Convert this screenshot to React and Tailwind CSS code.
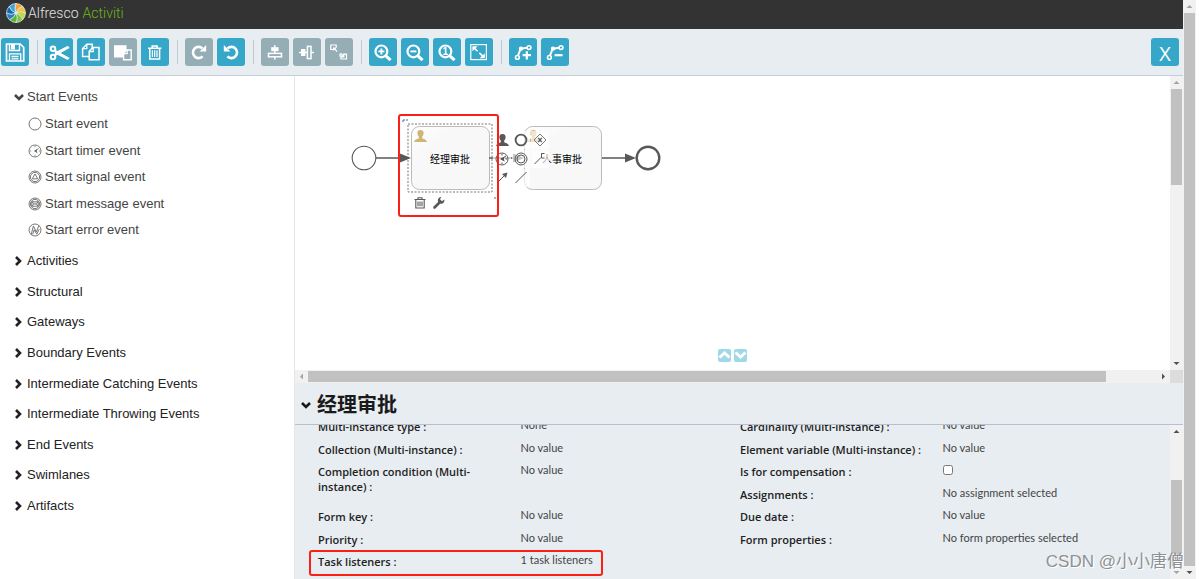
const SANS = "font-['Liberation_Sans','Noto_Sans_CJK_SC',sans-serif]";

/* ---------- toolbar icons, all on a 28x28 grid ---------- */

const Icon = ({ children }) => (
  <svg
    viewBox="0 0 28 28"
    className="size-7"
    fill="none"
    stroke="currentColor"
    strokeWidth="1.7"
    aria-hidden="true"
  >
    {children}
  </svg>
);

const SaveIcon = () => (
  <Icon>
    <path d="M5.5 6h13.7l3.5 3.5V23H5.5z" />
    <path d="M8.5 6v6.5h10V6" strokeWidth="1.4" />
    <path d="M10 6h4v5.5h-4z" fill="currentColor" stroke="none" />
    <path d="M8.5 23v-7.2h11.2V23M10.5 18.5h7M10.5 20.8h7" strokeWidth="1.3" />
  </Icon>
);

const CutIcon = () => (
  <Icon>
    <circle cx="8" cy="10.8" r="2.3" strokeWidth="2" />
    <circle cx="8" cy="19" r="2.3" strokeWidth="2" />
    <path d="M9.8 12.2L12 13.8 22.6 8.4 24.2 9.6 14.8 15 24.2 20.2 22.6 21.4 12 16 9.8 17.6" fill="currentColor" strokeWidth="1" />
    <path d="M9.6 12.2l4.6 3.4M9.6 17.6l4.6-3.4" strokeWidth="2" />
  </Icon>
);

const CopyIcon = () => (
  <Icon>
    <path d="M12 18.5H5.6v-8L9.8 6.2h5.4v5" strokeWidth="1.5" />
    <path d="M5.6 10.6h4.2V6.2" strokeWidth="1.3" />
    <path d="M12.2 13.2l3.8-3.8h6v12.4h-9.8z" strokeWidth="1.5" />
    <path d="M12.2 13.6h4V9.4" strokeWidth="1.3" />
  </Icon>
);

const PasteIcon = () => (
  <Icon>
    <path d="M5 7.2h12.5v12.3H5z" fill="currentColor" stroke="none" />
    <path d="M14.6 15.2l3.2-3.2h4.4v9.8h-7.6z" fill="#95aeb5" strokeWidth="1.4" />
    <path d="M14.6 15.6h3.6V12" strokeWidth="1.2" />
  </Icon>
);

const TrashIcon = () => (
  <Icon>
    <path d="M7 10.2h13.4M11.2 10V7.9h5V10M8.8 10.4V21h9.8V10.4" strokeWidth="1.5" />
    <path d="M11.4 12.3v6.8M13.7 12.3v6.8M16 12.3v6.8" strokeWidth="1.2" />
  </Icon>
);

const RedoIcon = () => (
  <Icon>
    <path d="M17.6 18.4a5.6 5.6 0 1 1-.2-8" strokeWidth="2.6" />
    <path d="M21.2 7v6.4h-6.6z" fill="currentColor" stroke="none" />
  </Icon>
);

const UndoIcon = () => (
  <Icon>
    <path d="M10.4 18.4a5.6 5.6 0 1 0 .2-8" strokeWidth="2.6" />
    <path d="M6.8 7v6.4h6.6z" fill="currentColor" stroke="none" />
  </Icon>
);

const AlignVerticalIcon = () => (
  <Icon>
    <path d="M13.8 7v14.8" strokeWidth="1.4" />
    <path d="M10.2 9.2h7.4v4h-7.4z" fill="currentColor" stroke="none" />
    <rect x="7.5" y="15.4" width="13" height="3.4" fill="#95aeb5" strokeWidth="1.5" />
  </Icon>
);

const AlignHorizontalIcon = () => (
  <Icon>
    <path d="M6 14.5h15" strokeWidth="1.4" />
    <path d="M8 11h4.4v7H8z" fill="currentColor" stroke="none" />
    <rect x="14.4" y="8.4" width="3.6" height="12.2" fill="#95aeb5" strokeWidth="1.5" />
  </Icon>
);

const SameSizeIcon = () => (
  <Icon>
    <path d="M8.6 11.5H5.8V7h5.4v2.4M17.4 18.2H15v-2.6M18 16.2h3.5V21h-5.6v-2" strokeWidth="1.2" />
    <path d="M8 9.4h4L8 13zM19.4 19.4v-4l-4 4z" fill="currentColor" stroke="none" />
    <path d="M9.4 10.6l2.8 3M18.2 18l-2.6-2.8" strokeWidth="1.2" />
  </Icon>
);

const Lens = ({ children }) => (
  <Icon>
    <circle cx="12.4" cy="13.4" r="5.9" strokeWidth="2.2" />
    <path d="M16.8 17.8l4.8 4.4" strokeWidth="3" />
    {children}
  </Icon>
);

const ZoomInIcon = () => (
  <Lens>
    <path d="M9.4 13.4h6M12.4 10.4v6" strokeWidth="1.9" />
  </Lens>
);

const ZoomOutIcon = () => (
  <Lens>
    <path d="M9.4 13.4h6" strokeWidth="1.9" />
  </Lens>
);

const ZoomActualIcon = () => (
  <Lens>
    <text
      x="12.4"
      y="17"
      textAnchor="middle"
      fill="currentColor"
      stroke="none"
      className="font-['Liberation_Sans',sans-serif] text-[10px] font-bold"
    >
      1
    </text>
  </Lens>
);

const ZoomFitIcon = () => (
  <Icon>
    <rect x="5.8" y="6.6" width="15.6" height="15" strokeWidth="1.2" />
    <path d="M7.4 8.2h5.2l-5.2 5zM19.8 20.2h-5.2l5.2-5z" fill="currentColor" stroke="none" />
    <path d="M9 9.8l9.2 8.8" strokeDasharray="5 2.4" />
  </Icon>
);

const BendPointIcon = ({ add }) => (
  <Icon>
    <circle cx="20" cy="9.6" r="1.9" strokeWidth="1.6" />
    <circle cx="12" cy="10.6" r="1.5" fill="currentColor" strokeWidth="1.4" />
    <circle cx="8.4" cy="19.4" r="1.9" strokeWidth="1.6" />
    <path d="M18.2 9.8l-5 .8M11.4 11.4l-2.4 6.2" strokeWidth="2" />
    <path d={add ? "M13.6 17.2h8.4M17.8 13.2v8.2" : "M13.6 17.2h8"} strokeWidth="2.2" />
  </Icon>
);

const toolbar = [
  [{ label: "Save", icon: <SaveIcon /> }],
  [
    { label: "Cut", icon: <CutIcon /> },
    { label: "Copy", icon: <CopyIcon /> },
    { label: "Paste", icon: <PasteIcon />, disabled: true },
    { label: "Delete", icon: <TrashIcon /> },
  ],
  [
    { label: "Redo", icon: <RedoIcon />, disabled: true },
    { label: "Undo", icon: <UndoIcon /> },
  ],
  [
    { label: "Align vertical", icon: <AlignVerticalIcon />, disabled: true },
    { label: "Align horizontal", icon: <AlignHorizontalIcon />, disabled: true },
    { label: "Same size", icon: <SameSizeIcon />, disabled: true },
  ],
  [
    { label: "Zoom in", icon: <ZoomInIcon /> },
    { label: "Zoom out", icon: <ZoomOutIcon /> },
    { label: "Zoom to actual size", icon: <ZoomActualIcon /> },
    { label: "Zoom to fit", icon: <ZoomFitIcon /> },
  ],
  [
    { label: "Add bend-point", icon: <BendPointIcon add /> },
    { label: "Remove bend-point", icon: <BendPointIcon /> },
  ],
];

// clockwise from the top
const petals = [
  "#f9a12e", "#fbc04a", "#c3d93a", "#86c440", "#5cb531", "#2a7fc4", "#1668ad", "#35a5dc",
];

const Header = () => (
  <header className="flex h-[29px] shrink-0 items-center bg-[#333] pb-[3px] pl-[6px]">
    <svg viewBox="-10 -10 20 20" className="size-5" aria-hidden="true">
      {petals.map((color, i) => (
        <path
          key={color}
          d="M0 0Q-2.500-5 0-9.500A9.500 9.500 0 0 1 6.700-6.700Q2-5.300 0 0z"
          fill={color}
          stroke="#e3f1f6"
          strokeWidth=".7"
          transform={`rotate(${i * 45})`}
        />
      ))}
      <circle r="1.6" fill="#d4ecf2" />
    </svg>
    <span className="ml-[2px] font-['Roboto',sans-serif] text-[14px] font-light text-[#e2e2e2]">Alfresco</span>
    <span className="ml-[4px] font-['Roboto',sans-serif] text-[14px] font-light text-[#6cb51a]">Activiti</span>
  </header>
);

const Toolbar = () => (
  <div className="flex h-[47px] shrink-0 items-center border-b border-[#c6ccd9] bg-[#e8edf1] pr-1 pl-px">
    {toolbar.map((group, i) => (
      <div key={group[0].label} className="flex items-center">
        {i > 0 && <div className="mr-[7px] ml-2 h-6 w-px bg-[#c3cad3]" />}
        <div className="flex gap-1">
          {group.map(({ label, icon, disabled }) => (
            <button
              key={label}
              type="button"
              aria-label={label}
              disabled={disabled}
              className="rounded-[3px] bg-[#36a7c9] text-white disabled:bg-[#95aeb5]"
            >
              {icon}
            </button>
          ))}
        </div>
      </div>
    ))}
    <button
      type="button"
      aria-label="Close editor"
      className="ml-auto size-7 rounded-[3px] bg-[#36a7c9] pt-1 font-['Open_Sans',sans-serif] text-xl leading-6 text-white"
    >
      X
    </button>
  </div>
);

/* ---------- stencil palette ---------- */

const Chevron = ({ open }) => (
  <svg viewBox="0 0 10 10" className="size-[10px]" fill="none" stroke="currentColor" strokeWidth="2.6" aria-hidden="true">
    <path d={open ? "M1 3l4 4 4-4" : "M2 1l4 4-4 4"} />
  </svg>
);

const eventMarks = {
  none: null,
  timer: (
    <>
      <path d="M10.5 4.5L7 7l2.4 1.8M7 2.2v1M7 10.8v1M2.2 7h1M10.8 7h1" />
      <path d="M5.8 7l3-1.8v3.6z" fill="#686868" stroke="none" />
    </>
  ),
  signal: (
    <>
      <circle cx="7" cy="7" r="4.6" />
      <path d="M7 4l2.8 4.8H4.2z" />
    </>
  ),
  message: (
    <>
      <circle cx="7" cy="7" r="4.6" />
      <path d="M3.8 4.8h6.4v4.4H3.8zM3.8 4.8L7 7.4l3.2-2.6M3.8 9.2L6 6.6M10.2 9.2L8 6.6" />
    </>
  ),
  error: <path d="M3.2 11.4L5.4 3l3 6 2.4-6.4M4.6 11.4l1.6-4.6 2.6 4.4 2.4-5" />,
};

const EventIcon = ({ type }) => (
  <svg viewBox="0 0 14 14" className="size-[14px]" fill="none" stroke="#686868" strokeWidth=".9" aria-hidden="true">
    <circle cx="7" cy="7" r="6" />
    {eventMarks[type]}
  </svg>
);

const startEvents = [
  { type: "none", label: "Start event" },
  { type: "timer", label: "Start timer event" },
  { type: "signal", label: "Start signal event" },
  { type: "message", label: "Start message event" },
  { type: "error", label: "Start error event" },
];

const groups = [
  "Activities",
  "Structural",
  "Gateways",
  "Boundary Events",
  "Intermediate Catching Events",
  "Intermediate Throwing Events",
  "End Events",
  "Swimlanes",
  "Artifacts",
];

const Palette = () => (
  <aside className="w-[295px] shrink-0 border-r border-[#e3e6ea] bg-white pt-[11px] text-[13px] leading-5 text-[#222]">
    <button type="button" className="flex h-5 items-center gap-[3px] pl-[14px] text-[#444]">
      <Chevron open />
      Start Events
    </button>
    <ul className="mt-[7px] flex h-[126px] flex-col justify-between pl-7 text-[#444]">
      {startEvents.map(({ type, label }) => (
        <li key={type} className="flex h-5 items-center gap-[3px]">
          <EventIcon type={type} />
          {label}
        </li>
      ))}
    </ul>
    <div className="mt-[11px] flex h-[265px] flex-col items-start justify-between pl-[14px]">
      {groups.map((name) => (
        <button key={name} type="button" className="flex h-5 items-center gap-[3px]">
          <Chevron />
          {name}
        </button>
      ))}
    </div>
  </aside>
);

/* ---------- scrollbars ---------- */

const Arrow = ({ d, dark }) => (
  <svg viewBox="0 0 13 13" className="size-[13px] shrink-0" fill={dark ? "#505050" : "#a3a3a3"} aria-hidden="true">
    <path d={d} />
  </svg>
);

const UP = "M3.5 8L6.5 5l3 3z";
const DOWN = "M3.5 5l3 3 3-3z";
const LEFT = "M8 3.5L5 6.5l3 3z";
const RIGHT = "M5 3.5l3 3-3 3z";

const VerticalScrollbar = ({ upDark, downDark, children }) => (
  <div className="flex w-[13px] shrink-0 flex-col bg-[#f1f1f1]">
    <Arrow d={UP} dark={upDark} />
    <div className="flex min-h-0 flex-1 flex-col px-px">{children}</div>
    <Arrow d={DOWN} dark={downDark} />
  </div>
);

/* ---------- canvas ---------- */

const UserShape = ({ fill, x, y }) => (
  <path
    transform={`translate(${x} ${y})`}
    fill={fill}
    stroke="none"
    d="M6.5 0C8.8 0 9.8 1.4 9.6 3.6 9.5 5.2 8.8 6 8.2 6.6v1.6c1 .6 4 .9 4.7 3.8H.1C.8 9.1 3.8 8.8 4.8 8.2V6.6C4.2 6 3.5 5.2 3.4 3.6 3.2 1.4 4.2 0 6.5 0z"
  />
);

const Diagram = () => (
  <svg width="400" height="160" className="block" fill="none" stroke="#585858">
    <defs>
      <linearGradient id="task" x1="0" y1="0" x2="1" y2="1">
        <stop offset="0" stopColor="#fff" />
        <stop offset="0.3" stopColor="#f8f8f8" />
      </linearGradient>
    </defs>
    <circle cx="69" cy="82" r="11.8" strokeWidth="1.1" />
    <rect x="116.5" y="50.5" width="78" height="63" rx="8" fill="url(#task)" stroke="#bbb" />
    <rect x="229.5" y="50.5" width="77" height="63" rx="8" fill="url(#task)" stroke="#bbb" />
    <rect x="113" y="48" width="84" height="68" stroke="#777" strokeDasharray="2 1.5" />
    <path d="M81 82h26M194 82h30M307 82h26" strokeWidth="1.7" />
    <path
      d="M105 77.5L116 82l-11 4.5zM218 77.5L229 82l-11 4.5zM330 77.5L341 82l-11 4.5z"
      fill="#585858"
      stroke="none"
    />
    <circle cx="353" cy="82" r="11.3" strokeWidth="2.4" />
    <UserShape fill="#d1b575" x={119} y={54} />
    <UserShape fill="#d1b575" x={232} y={54} />
    <g fill="#000" stroke="none" textAnchor="middle" className="text-[10px]">
      <text x="155" y="87">经理审批</text>
      <text x="267" y="87">人事审批</text>
    </g>
    <path d="M108 46v-2h2M111 44h2M199 122h2" stroke="#3b6ea8" />
  </svg>
);

const quickItems = [
  { label: "User task", mark: <UserShape fill="#585858" x={3} y={3} /> },
  { label: "End event", mark: <circle cx="9" cy="9" r="5.4" strokeWidth="1.9" /> },
  {
    label: "Exclusive gateway",
    mark: (
      <>
        <path d="M9 3l6 6-6 6-6-6z" stroke="#777" />
        <path d="M7.2 6.8l3.6 4.4M10.8 6.8l-3.6 4.4" strokeWidth="1.3" />
      </>
    ),
  },
  {
    label: "Timer event",
    mark: (
      <>
        <circle cx="9" cy="9" r="6" />
        <path d="M13 6L8 9l3.6 2M9 4v1.5M9 12.5V14M4 9h1.5M12.5 9H14" />
        <path d="M7 9l4-2v4z" fill="#585858" stroke="none" />
      </>
    ),
  },
  {
    label: "Throw event",
    mark: (
      <>
        <circle cx="9" cy="9" r="6" />
        <circle cx="9" cy="9" r="4" />
      </>
    ),
  },
  { label: "Text annotation", mark: <path d="M3.5 14L10 7.5M13.5 3.5h-3V8h3" /> },
  {
    label: "Sequence flow",
    mark: (
      <>
        <path d="M4 14l7-7" />
        <path d="M14.5 3.5L13 9 9 5z" fill="#585858" stroke="none" />
      </>
    ),
  },
  { label: "Association", mark: <path d="M3.5 14L14.5 3" /> },
];

const QuickButton = ({ label, children, clear }) => (
  <button type="button" aria-label={label} className={clear ? "size-[18px]" : "size-[18px] bg-white/65"}>
    <svg viewBox="0 0 18 18" className="size-[18px]" fill="none" stroke="#585858" strokeWidth="1" aria-hidden="true">
      {children}
    </svg>
  </button>
);

const Canvas = () => (
  <section className="flex min-h-0 flex-1 flex-col">
    <div className="flex min-h-0 flex-1">
      <div className="relative min-w-0 flex-1 overflow-hidden bg-white">
        <Diagram />

        <div className="absolute top-[55px] left-[198px] grid grid-cols-3 gap-px">
          {quickItems.map(({ label, mark }) => (
            <QuickButton key={label} label={label}>{mark}</QuickButton>
          ))}
        </div>

        <div className="absolute top-[118px] left-[116px] flex gap-px">
          <QuickButton label="Delete element" clear>
            <path d="M3.5 5.5h11M7 5V3.7h4V5M4.8 5.5V14h8.4V5.5M7 7.5v4.7M9 7.5v4.7M11 7.5v4.7" strokeWidth="1.1" />
          </QuickButton>
          <QuickButton label="Change element type" clear>
            <path d="M4.5 13.5l5-5" strokeWidth="2.6" strokeLinecap="round" />
            <path d="M14.3 5.5a3.3 3.3 0 1 1-3-2.4L10 5.2l2 2z" fill="#585858" stroke="none" />
          </QuickButton>
        </div>

        <div className="pointer-events-none absolute top-[38px] left-[103px] h-[103px] w-[101px] rounded-[3px] border-[2px] border-[#fb2015]" />

        <div className="absolute inset-x-0 bottom-2 flex justify-center gap-[3px]">
          <button type="button" aria-label="Collapse up" className="rounded-[2px] bg-[#9fd8e6] text-white">
            <svg viewBox="0 0 13 13" className="size-[13px]" fill="none" stroke="currentColor" strokeWidth="3">
              <path d="M1.5 8.5l5-4.5 5 4.5" />
            </svg>
          </button>
          <button type="button" aria-label="Collapse down" className="rounded-[2px] bg-[#9fd8e6] text-white">
            <svg viewBox="0 0 13 13" className="size-[13px]" fill="none" stroke="currentColor" strokeWidth="3">
              <path d="M1.5 3.5l5 4.5 5-4.5" />
            </svg>
          </button>
        </div>
      </div>
      <VerticalScrollbar downDark>
        <div className="h-[36%] bg-[#c1c1c1]" />
      </VerticalScrollbar>
    </div>

    <div className="flex h-[13px] shrink-0 bg-[#f1f1f1]">
      <Arrow d={LEFT} />
      <div className="flex-1 py-px">
        <div className="h-full w-[94%] bg-[#c1c1c1]" />
      </div>
      <Arrow d={RIGHT} dark />
      <div className="w-[13px] bg-[#dcdcdc]" />
    </div>
  </section>
);

/* ---------- properties ---------- */

const leftProps = [
  { name: "Multi-instance type", value: "None" },
  { name: "Collection (Multi-instance)", value: "No value" },
  { name: "Completion condition (Multi-instance)", value: "No value", tall: true },
  { name: "Form key", value: "No value" },
  { name: "Priority", value: "No value" },
  { name: "Task listeners", value: "1 task listeners", marked: true },
];

const rightProps = [
  { name: "Cardinality (Multi-instance)", value: "No value" },
  { name: "Element variable (Multi-instance)", value: "No value" },
  { name: "Is for compensation", checkbox: true },
  { name: "Assignments", value: "No assignment selected" },
  { name: "Due date", value: "No value" },
  { name: "Form properties", value: "No form properties selected" },
];

const PropertyList = ({ items }) => (
  <dl className="grid h-[158px] grid-rows-7">
    {items.map(({ name, value, tall, marked, checkbox }) => (
      <div
        key={name}
        className={`relative grid grid-cols-[48fr_52fr] ${tall ? "row-span-2" : ""}`}
      >
        <dt className="pt-1 pr-4 font-['Open_Sans','Noto_Sans_CJK_SC',sans-serif] font-semibold text-[#222]">
          {checkbox ? <label htmlFor="compensation">{name} :</label> : `${name} :`}
        </dt>
        <dd className="pt-[2px] text-[#444]">
          {checkbox ? (
            <input id="compensation" type="checkbox" className="mt-[3px] block size-[10px]" />
          ) : (
            value
          )}
        </dd>
        {marked && (
          <div className="absolute top-0 -left-[9px] h-[26px] w-[294px] rounded-[3px] border-2 border-[#fb2015]" />
        )}
      </div>
    ))}
  </dl>
);

const Properties = () => (
  <section className="shrink-0 bg-[#e8edf1]">
    <h2 className="h-[42px] border-b border-[#b9bfd0] pt-[2px] pl-[6px]">
      <button type="button" className="flex h-full items-center gap-[6px] text-xl font-bold text-[#1a1a1a]">
        <Chevron open />
        经理审批
      </button>
    </h2>
    <div className="flex h-[154px]">
      <div className="min-w-0 flex-1 overflow-hidden pr-2 pl-[23px] font-['Lato','Noto_Sans_CJK_SC',sans-serif] text-[11px] leading-[15px]">
        <div className="-mt-[10px] grid grid-cols-2">
          <PropertyList items={leftProps} />
          <PropertyList items={rightProps} />
        </div>
      </div>
      <VerticalScrollbar upDark>
        <div className="mt-auto h-[67%] bg-[#c1c1c1]" />
      </VerticalScrollbar>
    </div>
  </section>
);

export default function App() {
  return (
    <div className={`relative flex h-screen overflow-hidden bg-white pr-[3px] ${SANS}`}>
      <div className="flex min-w-0 flex-1 flex-col">
        <Header />
        <Toolbar />
        <div className="flex min-h-0 flex-1">
          <Palette />
          <main className="flex min-w-0 flex-1 flex-col">
            <Canvas />
            <Properties />
          </main>
        </div>
      </div>
      <VerticalScrollbar downDark>
        <div className="flex-1 bg-[#c1c1c1]" />
      </VerticalScrollbar>
      <p className="pointer-events-none absolute right-[15px] bottom-[5px] text-[17px] text-[#8d9194] [text-shadow:1px_1px_0_#fff]">
        CSDN @小小唐僧
      </p>
    </div>
  );
}
